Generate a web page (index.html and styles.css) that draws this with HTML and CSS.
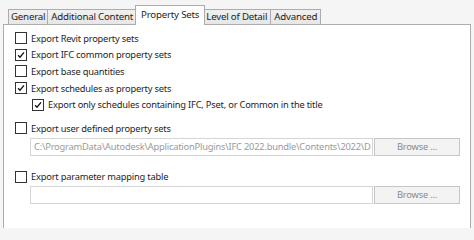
FILE: index.html
```html
<!DOCTYPE html>
<html>
<head>
<meta charset="utf-8">
<link rel="stylesheet" href="styles.css">
</head>
<body>
<div class="window">
  <div class="tabs">
    <div class="tab">General</div>
    <div class="tab">Additional Content</div>
    <div class="tab active">Property Sets</div>
    <div class="tab">Level of Detail</div>
    <div class="tab">Advanced</div>
  </div>
  <div class="panel">
    <div class="row"><span class="cb"></span><span>Export Revit property sets</span></div>
    <div class="row"><span class="cb"><svg viewBox="0 0 12 12"><path d="M2.5 6.2 L4.8 8.6 L9.6 2.8" /></svg></span><span>Export IFC common property sets</span></div>
    <div class="row"><span class="cb"></span><span>Export base quantities</span></div>
    <div class="row"><span class="cb"><svg viewBox="0 0 12 12"><path d="M2.5 6.2 L4.8 8.6 L9.6 2.8" /></svg></span><span>Export schedules as property sets</span></div>
    <div class="row sub"><span class="cb"><svg viewBox="0 0 12 12"><path d="M2.5 6.2 L4.8 8.6 L9.6 2.8" /></svg></span><span>Export only schedules containing IFC, Pset, or Common in the title</span></div>
    <div class="row gap"><span class="cb"></span><span>Export user defined property sets</span></div>
    <div class="field">
      <div class="input">C:\ProgramData\Autodesk\ApplicationPlugins\IFC 2022.bundle\Contents\2022\D</div>
      <div class="btn">Browse ...</div>
    </div>
    <div class="row gap2"><span class="cb"></span><span>Export parameter mapping table</span></div>
    <div class="field">
      <div class="input"></div>
      <div class="btn">Browse ...</div>
    </div>
  </div>
</div>
</body>
</html>
```
FILE: styles.css
```css
html, body {
  margin: 0;
  padding: 0;
  background: #f5f5f5;
  width: 474px;
  height: 228px;
  overflow: hidden;
  font-family: "Noto Sans", "Open Sans", sans-serif;
  font-size: 9.3px;
  letter-spacing: -0.2px;
  color: #1e1e1e;
}
.window {
  padding: 0 3px;
}
.tabs {
  display: flex;
  align-items: flex-end;
  padding: 5px 0 0 5px;
  position: relative;
  z-index: 2;
  font-size: 9.7px;
  letter-spacing: -0.2px;
}
.tab {
  height: 15px;
  line-height: 14px;
  padding: 0 3px;
  border: 1px solid #acacac;
  border-bottom: none;
  border-left: none;
  background: linear-gradient(#f0f0f0, #e6e6e6);
  box-sizing: border-box;
  white-space: nowrap;
}
.tab:first-child {
  border-left: 1px solid #acacac;
  padding: 0 2px;
}
.tab.active {
  height: 20px;
  line-height: 18px;
  background: #fff;
  border-left: 1px solid #acacac;
  margin: 0 -2px -1px -2px;
  padding: 0 5px 0 5px;
  position: relative;
}
.tab.active + .tab {
  border-left: none;
}
.panel {
  background: #fff;
  border: 1px solid #acacac;
  height: 212px;
  padding: 5px 0 0 11px;
  box-sizing: border-box;
}
.row {
  display: flex;
  align-items: center;
  height: 16.6px;
  white-space: nowrap;
}
.row.sub {
  padding-left: 17px;
}
.row.gap {
  margin-top: 7px;
}
.row.gap2 {
  margin-top: 13px;
}
.cb {
  width: 12px;
  height: 12px;
  border: 1px solid #333;
  box-sizing: border-box;
  margin-right: 4px;
  flex: none;
  display: flex;
  background: #fff;
}
.cb svg {
  width: 10px;
  height: 10px;
  fill: none;
  stroke: #111;
  stroke-width: 1.6;
}
.field {
  display: flex;
  margin: 1px 0 0 15px;
  height: 18px;
  width: 430px;
}
.input {
  flex: 1;
  border: 1px solid #d5d5d5;
  background: #fff;
  color: #9a9a9a;
  padding: 0 3px;
  line-height: 16px;
  overflow: hidden;
  white-space: nowrap;
  box-sizing: border-box;
}
.btn {
  width: 86px;
  flex: none;
  margin-left: 1px;
  border: 1px solid #c6c6c6;
  background: #f3f3f3;
  color: #8a8a8a;
  text-align: center;
  line-height: 16px;
  box-sizing: border-box;
}
```
